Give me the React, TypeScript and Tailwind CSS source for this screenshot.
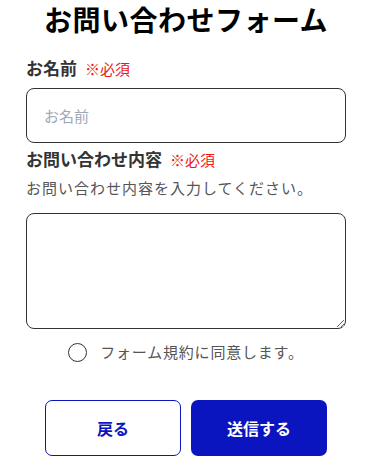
import { useState } from 'react'

export default function App() {
  const [agree, setAgree] = useState(false)

  return (
    <div className="w-[386px] min-h-[464px] bg-white font-['Noto_Sans_CJK_JP','Noto_Sans',sans-serif] text-[#333]">
      <div className="w-[320px] ml-[26px] flex flex-col">
        {/* Title */}
        <h1 className="text-center text-[28px] font-bold text-black leading-[38px] tracking-[0.5px]">
          お問い合わせフォーム
        </h1>

        {/* Name */}
        <div className="mt-[18px] flex items-baseline gap-[8px]">
          <span className="text-[17px] font-bold leading-[24px]">お名前</span>
          <span className="text-[15px] text-[#f01818] leading-[24px]">※必須</span>
        </div>
        <input
          type="text"
          placeholder="お名前"
          className="mt-[7px] h-[55px] w-full rounded-[8px] border border-[#333] px-[17px] text-[15px] placeholder-[#a0a8b8] outline-none"
        />

        {/* Message */}
        <div className="mt-[4px] flex items-baseline gap-[8px]">
          <span className="text-[17px] font-bold leading-[24px]">お問い合わせ内容</span>
          <span className="text-[15px] text-[#f01818] leading-[24px]">※必須</span>
        </div>
        <p className="mt-[4px] text-[15px] text-[#555] leading-[24px] tracking-[1px]">
          お問い合わせ内容を入力してください。
        </p>
        <textarea className="mt-[13px] h-[116px] w-full rounded-[8px] border border-[#333] px-[17px] py-[10px] text-[15px] outline-none" />

        {/* Agree */}
        <label className="mt-[11px] flex items-center justify-center gap-[13px] cursor-pointer">
          <button
            type="button"
            onClick={() => setAgree(!agree)}
            className="w-[19px] h-[19px] rounded-full border-[1.5px] border-[#333] flex items-center justify-center"
          >
            {agree && <span className="w-[9px] h-[9px] rounded-full bg-[#0a14bf]" />}
          </button>
          <span className="text-[15px] text-[#555] leading-[24px] tracking-[0.8px]">フォーム規約に同意します。</span>
        </label>

        {/* Buttons */}
        <div className="mt-[36px] flex justify-center gap-[10px]">
          <button className="w-[136px] h-[56px] rounded-[7px] border border-[#0a14bf] bg-white text-[#0a14bf] text-[16px] font-bold">
            戻る
          </button>
          <button className="w-[136px] h-[56px] rounded-[7px] bg-[#0a14bf] text-white text-[16px] font-bold">
            送信する
          </button>
        </div>
      </div>
    </div>
  )
}
